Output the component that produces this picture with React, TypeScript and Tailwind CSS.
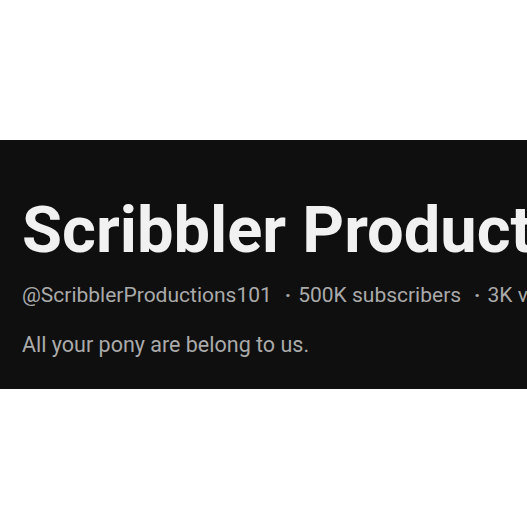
export default function App() {
  return (
    <div className="w-[527px] h-[527px] bg-white overflow-hidden" style={{ fontFamily: "Roboto, 'Liberation Sans', sans-serif" }}>
      <div className="h-[140px]" />
      <section className="bg-[#0f0f0f] h-[249px] pl-[22px] pt-[55px] whitespace-nowrap overflow-hidden">
        <h1 className="text-[65px] leading-[70px] font-bold text-[#f1f1f1]">Scribbler Productions</h1>
        <div className="mt-[16px] flex items-center text-[21px] leading-[28px] text-[#aaaaaa]">
          <span>@ScribblerProductions101</span>
          <span className="ml-[13px] mr-[7px] font-bold">·</span>
          <span>500K subscribers</span>
          <span className="ml-[13px] mr-[7px] font-bold">·</span>
          <span>3K videos</span>
        </div>
        <p className="mt-[22px] text-[21.5px] leading-[28px] text-[#aaaaaa]">All your pony are belong to us.</p>
      </section>
    </div>
  );
}
